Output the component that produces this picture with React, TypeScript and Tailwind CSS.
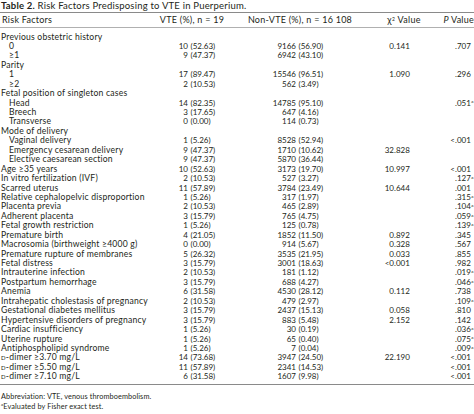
import React from 'react';

type Row = {
  label: React.ReactNode;
  sub?: boolean;
  vte?: string;
  non?: string;
  chi?: string;
  p?: string;
  a?: boolean;
};

const dimer = (v: string) => (
  <>
    <span className="[font-variant:small-caps]">d</span>-dimer ≥{v} mg/L
  </>
);

const rows: Row[] = [
  { label: 'Previous obstetric history' },
  { label: '0', sub: true, vte: '10 (52.63)', non: '9166 (56.90)', chi: '0.141', p: '.707' },
  { label: '≥1', sub: true, vte: '9 (47.37)', non: '6942 (43.10)' },
  { label: 'Parity' },
  { label: '1', sub: true, vte: '17 (89.47)', non: '15546 (96.51)', chi: '1.090', p: '.296' },
  { label: '≥2', sub: true, vte: '2 (10.53)', non: '562 (3.49)' },
  { label: 'Fetal position of singleton cases' },
  { label: 'Head', sub: true, vte: '14 (82.35)', non: '14785 (95.10)', p: '.051', a: true },
  { label: 'Breech', sub: true, vte: '3 (17.65)', non: '647 (4.16)' },
  { label: 'Transverse', sub: true, vte: '0 (0.00)', non: '114 (0.73)' },
  { label: 'Mode of delivery' },
  { label: 'Vaginal delivery', sub: true, vte: '1 (5.26)', non: '8528 (52.94)', p: '<.001' },
  { label: 'Emergency cesarean delivery', sub: true, vte: '9 (47.37)', non: '1710 (10.62)', chi: '32.828' },
  { label: 'Elective caesarean section', sub: true, vte: '9 (47.37)', non: '5870 (36.44)' },
  { label: 'Age ≥35 years', vte: '10 (52.63)', non: '3173 (19.70)', chi: '10.997', p: '<.001' },
  { label: 'In vitro fertilization (IVF)', vte: '2 (10.53)', non: '527 (3.27)', p: '.127', a: true },
  { label: 'Scarred uterus', vte: '11 (57.89)', non: '3784 (23.49)', chi: '10.644', p: '.001' },
  { label: 'Relative cephalopelvic disproportion', vte: '1 (5.26)', non: '317 (1.97)', p: '.315', a: true },
  { label: 'Placenta previa', vte: '2 (10.53)', non: '465 (2.89)', p: '.104', a: true },
  { label: 'Adherent placenta', vte: '3 (15.79)', non: '765 (4.75)', p: '.059', a: true },
  { label: 'Fetal growth restriction', vte: '1 (5.26)', non: '125 (0.78)', p: '.139', a: true },
  { label: 'Premature birth', vte: '4 (21.05)', non: '1852 (11.50)', chi: '0.892', p: '.345' },
  { label: 'Macrosomia (birthweight ≥4000 g)', vte: '0 (0.00)', non: '914 (5.67)', chi: '0.328', p: '.567' },
  { label: 'Premature rupture of membranes', vte: '5 (26.32)', non: '3535 (21.95)', chi: '0.033', p: '.855' },
  { label: 'Fetal distress', vte: '3 (15.79)', non: '3001 (18.63)', chi: '<0.001', p: '.982' },
  { label: 'Intrauterine infection', vte: '2 (10.53)', non: '181 (1.12)', p: '.019', a: true },
  { label: 'Postpartum hemorrhage', vte: '3 (15.79)', non: '688 (4.27)', p: '.046', a: true },
  { label: 'Anemia', vte: '6 (31.58)', non: '4530 (28.12)', chi: '0.112', p: '.738' },
  { label: 'Intrahepatic cholestasis of pregnancy', vte: '2 (10.53)', non: '479 (2.97)', p: '.109', a: true },
  { label: 'Gestational diabetes mellitus', vte: '3 (15.79)', non: '2437 (15.13)', chi: '0.058', p: '.810' },
  { label: 'Hypertensive disorders of pregnancy', vte: '3 (15.79)', non: '883 (5.48)', chi: '2.152', p: '.142' },
  { label: 'Cardiac insufficiency', vte: '1 (5.26)', non: '30 (0.19)', p: '.036', a: true },
  { label: 'Uterine rupture', vte: '1 (5.26)', non: '65 (0.40)', p: '.075', a: true },
  { label: 'Antiphospholipid syndrome', vte: '1 (5.26)', non: '7 (0.04)', p: '.009', a: true },
  { label: dimer('3.70'), vte: '14 (73.68)', non: '3947 (24.50)', chi: '22.190', p: '<.001' },
  { label: dimer('5.50'), vte: '11 (57.89)', non: '2341 (14.53)', p: '<.001' },
  { label: dimer('7.10'), vte: '6 (31.58)', non: '1607 (9.98)', p: '<.001' },
];

// split "n (pct)" so the brackets line up down the column
const Count = ({ v, lead }: { v?: string; lead: string }) => {
  if (!v) return <div />;
  const i = v.indexOf(' (');
  return (
    <div className="flex text-[8px]">
      <span className={`${lead} text-right`}>{v.slice(0, i)}</span>
      <span className="ml-[2.5px]">{v.slice(i + 1)}</span>
    </div>
  );
};

// decimal aligned number
const Dec = ({ v, lead, a }: { v?: string; lead: string; a?: boolean }) => {
  if (!v) return <div />;
  const i = v.indexOf('.');
  return (
    <div className="flex text-[8px]">
      <span className={`${lead} text-right`}>{v.slice(0, i)}</span>
      <span>
        {v.slice(i)}
        {a && <sup className="text-[4.5px] ml-[0.5px]">a</sup>}
      </span>
    </div>
  );
};

export default function App() {
  return (
    <div className="w-[474px] h-[414px] overflow-hidden bg-white text-[#231f20] font-['Lato','Open_Sans',sans-serif]">
      <div className="w-[488px]">
        <p className="text-[9.5px] leading-[11px] tracking-[0.2px] pl-px">
          <span className="font-bold">Table 2.</span> Risk Factors Predisposing to VTE in Puerperium.
        </p>

        <div className="border-t-[1.5px] border-[#8a8a8a] mt-px" />
        <div className="grid grid-cols-[152px_80px_136px_72px_48px] items-center h-[15px] text-[9px] tracking-[0.25px] border-b border-[#b0b0b0]">
          <div className="pl-[2px]">Risk Factors</div>
          <div className="text-center">VTE (%), n = 19</div>
          <div className="text-center">Non-VTE (%), n = 16 108</div>
          <div className="text-center">
            χ<sup className="text-[5px]">2</sup> Value
          </div>
          <div className="text-right pr-[14px]">
            <span className="italic">P</span> Value
          </div>
        </div>

        <div className="pt-[4.5px] pb-[2px]">
          {rows.map((r, idx) => (
            <div key={idx} className="grid grid-cols-[152px_76px_136px_72px_52px] h-[9.45px] leading-[9.45px] whitespace-nowrap">
              <div className={`text-[8.6px] tracking-[0.2px] ${r.sub ? 'pl-[9px]' : 'pl-px'}`}>{r.label}</div>
              <Count v={r.vte} lead="w-[36px]" />
              <Count v={r.non} lead="w-[68px]" />
              <Dec v={r.chi} lead="w-[30px]" />
              <Dec v={r.p} lead="w-[19px]" a={r.a} />
            </div>
          ))}
        </div>
        <div className="border-t-[1.5px] border-[#8a8a8a]" />

        <div className="pt-[7px] text-[7.3px] tracking-[0.1px] leading-[10px] pl-px">
          <p>Abbreviation: VTE, venous thromboembolism.</p>
          <p>
            <sup className="text-[4.5px]">a</sup>Evaluated by Fisher exact test.
          </p>
        </div>
      </div>
    </div>
  );
}
